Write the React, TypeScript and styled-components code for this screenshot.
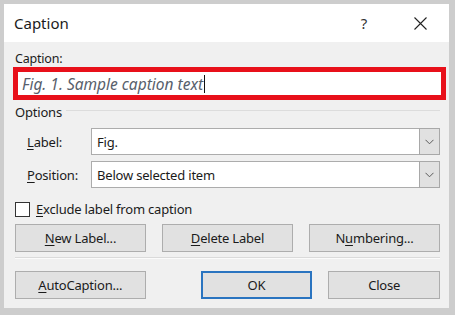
import styled, { createGlobalStyle } from "styled-components";

const GlobalStyle = createGlobalStyle`
  html, body {
    margin: 0;
    padding: 0;
    background: #cdcdcd;
  }
  body {
    font-family: "Noto Sans", "Open Sans", sans-serif;
    color: #1b1b1b;
  }
`

const Frame = styled.div`
  width: 455px;
  height: 315px;
  box-sizing: border-box;
  padding: 4px 6px 7px 4px;
  background: #cdcdcd;
`

const Dialog = styled.div`
  height: 100%;
  background: #f0f0f0;
  display: flex;
  flex-direction: column;
`

const TitleBar = styled.div`
  height: 38px;
  flex-shrink: 0;
  background: #ffffff;
  display: flex;
  align-items: center;
  padding: 0 6px 0 10px;
  font-size: 15px;
`

const Title = styled.div`
  flex: 1;
`

const TitleButton = styled.div<{ $gap?: number }>`
  width: 46px;
  height: 38px;
  margin-right: ${(p) => p.$gap ?? 0}px;
  display: flex;
  align-items: center;
  justify-content: center;
  font-size: 15px;
  color: #333;
`

const Body = styled.div`
  padding: 0 9px 0 11px;
  display: flex;
  flex-direction: column;
  font-size: 13px;
  letter-spacing: -0.2px;
`

const SmallLabel = styled.div`
  font-size: 12.5px;
  height: 17px;
  line-height: 17px;
  margin-top: 8px;
`

const Highlight = styled.div`
  margin: 0 -6px 0 -2px;
  height: 33px;
  box-sizing: border-box;
  border: 5px solid #e8101a;
  background: #ffffff;
  padding-left: 4px;
  display: flex;
  align-items: center;
  font-size: 15.5px;
  letter-spacing: 0;
  font-style: italic;
  color: #58606b;
`

const Caret = styled.span`
  display: inline-block;
  width: 1px;
  height: 18px;
  background: #111;
  margin-left: 1px;
`

const GroupHeader = styled.div`
  margin-top: 2px;
  height: 20px;
  display: flex;
  align-items: center;
`

const GroupLine = styled.div`
  flex: 1;
  height: 1px;
  background: #dcdcdc;
  margin: 0 0 3px 4px;
`

const FieldRow = styled.div<{ $top: number }>`
  margin-top: ${(p) => p.$top}px;
  height: 27px;
  display: flex;
  align-items: center;
`

const FieldLabel = styled.div`
  width: 76px;
  box-sizing: border-box;
  padding-left: 12px;
`

const Select = styled.div`
  flex: 1;
  height: 27px;
  box-sizing: border-box;
  border: 1px solid #acacac;
  background: #ffffff;
  display: flex;
  align-items: center;
  padding-left: 5px;
`

const SelectValue = styled.div`
  flex: 1;
`

const DropButton = styled.div`
  width: 21px;
  height: 27px;
  margin: -1px -1px -1px 0;
  box-sizing: border-box;
  border: 1px solid #a8a8a8;
  background: #e1e1e1;
  display: flex;
  align-items: center;
  justify-content: center;
`

const CheckRow = styled.div`
  margin-top: 13px;
  height: 16px;
  display: flex;
  align-items: center;
`

const CheckBox = styled.div`
  width: 15px;
  height: 15px;
  box-sizing: border-box;
  border: 1px solid #333333;
  background: #ffffff;
  margin-right: 6px;
`

const ButtonRow = styled.div<{ $top: number }>`
  margin-top: ${(p) => p.$top}px;
  display: flex;
  gap: 16px;
`

const Button = styled.div<{ $w: number; $primary?: boolean }>`
  width: ${(p) => p.$w}px;
  height: 28px;
  box-sizing: border-box;
  border: ${(p) => (p.$primary ? "2px solid #2a74c0" : "1px solid #adadad")};
  background: #e1e1e1;
  display: flex;
  align-items: center;
  justify-content: center;
  color: #1b1b1b;
`

const Spacer = styled.div<{ $w: number }>`
  width: ${(p) => p.$w}px;
`

const Separator = styled.div`
  margin-top: 5px;
  height: 1px;
  background: #dadada;
  border-bottom: 1px solid #fbfbfb;
`

const Key = styled.span`
  text-decoration: underline;
  text-underline-offset: 2px;
`

const Chevron = () => (
  <svg width="9" height="6" viewBox="0 0 9 6">
    <path d="M0.5 0.8 L4.5 4.8 L8.5 0.8" fill="none" stroke="#5a5a5a" strokeWidth="1" />
  </svg>
)

const CloseIcon = () => (
  <svg width="13" height="13" viewBox="0 0 13 13">
    <path d="M0.5 0.5 L12.5 12.5 M12.5 0.5 L0.5 12.5" stroke="#222" strokeWidth="1.1" />
  </svg>
)

const App = () => {
  return (
    <>
      <GlobalStyle />
      <Frame>
        <Dialog>
          <TitleBar>
            <Title>Caption</Title>
            <TitleButton $gap={10}>?</TitleButton>
            <TitleButton>
              <CloseIcon />
            </TitleButton>
          </TitleBar>
          <Body>
            <SmallLabel>Caption:</SmallLabel>
            <Highlight>
              Fig. 1. Sample caption text
              <Caret />
            </Highlight>
            <GroupHeader>
              Options
              <GroupLine />
            </GroupHeader>
            <FieldRow $top={6}>
              <FieldLabel>
                <Key>L</Key>abel:
              </FieldLabel>
              <Select>
                <SelectValue>Fig.</SelectValue>
                <DropButton>
                  <Chevron />
                </DropButton>
              </Select>
            </FieldRow>
            <FieldRow $top={6}>
              <FieldLabel>
                <Key>P</Key>osition:
              </FieldLabel>
              <Select>
                <SelectValue>Below selected item</SelectValue>
                <DropButton>
                  <Chevron />
                </DropButton>
              </Select>
            </FieldRow>
            <CheckRow>
              <CheckBox />
              <span>
                <Key>E</Key>xclude label from caption
              </span>
            </CheckRow>
            <ButtonRow $top={7}>
              <Button $w={131}>
                <span>
                  <Key>N</Key>ew Label...
                </span>
              </Button>
              <Button $w={131}>
                <span>
                  <Key>D</Key>elete Label
                </span>
              </Button>
              <Button $w={131}>
                <span>
                  N<Key>u</Key>mbering...
                </span>
              </Button>
            </ButtonRow>
            <Separator />
            <ButtonRow $top={12}>
              <Button $w={131}>
                <span>
                  <Key>A</Key>utoCaption...
                </span>
              </Button>
              <Spacer $w={23} />
              <Button $w={112} $primary>
                OK
              </Button>
              <Button $w={112}>Close</Button>
            </ButtonRow>
          </Body>
        </Dialog>
      </Frame>
    </>
  );
};

export default App;
